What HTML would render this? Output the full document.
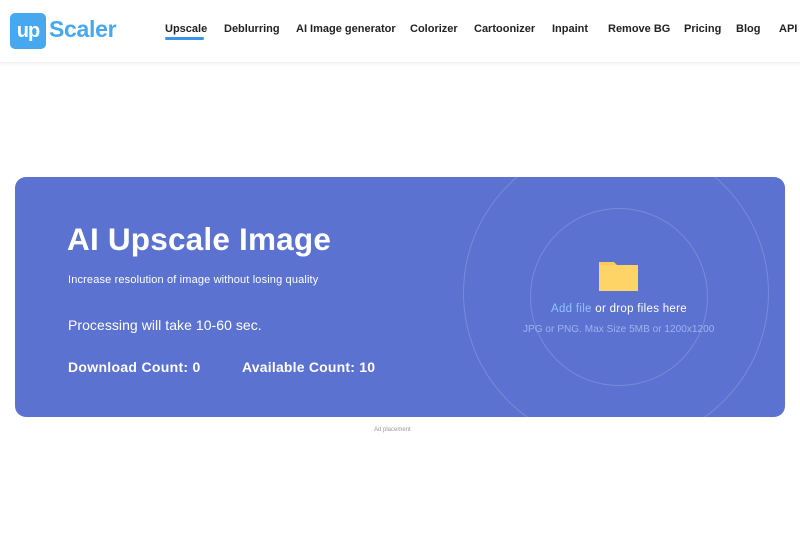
<!DOCTYPE html>
<html><head><meta charset="utf-8"><style>
*{margin:0;padding:0;box-sizing:border-box}
body{width:800px;height:533px;background:#fff;font-family:"Liberation Sans",sans-serif;position:relative;overflow:hidden}
.hdr{position:absolute;left:0;top:0;width:800px;height:63px;background:#fff;box-shadow:0 1px 3px rgba(0,0,0,.06);border-bottom:1px solid #f0f0f3}
.logo{position:absolute;left:10px;top:13px;width:36px;height:36px;background:#47a7ef;border-radius:5px;color:#fff;font-weight:bold;font-size:20px;line-height:36px;text-align:center;letter-spacing:-1px}
.logot{position:absolute;left:49px;top:16px;font-size:23px;font-weight:bold;color:#47a7ef;letter-spacing:-0.3px}
.nav a{position:absolute;top:23px;font-size:11px;font-weight:bold;color:#222;text-decoration:none;white-space:nowrap}
.ul{position:absolute;left:165px;top:37px;width:39px;height:3px;border-radius:2px;background:#3a95e5}
.card{position:absolute;left:15px;top:177px;width:770px;height:240px;background:#5b72d0;border-radius:11px;overflow:hidden}
.c{position:absolute;border:1px solid rgba(255,255,255,.18);border-radius:50%}
.t{position:absolute;color:#fff;white-space:nowrap}
</style></head><body>
<div class="hdr">
<div class="logo">up</div><div class="logot">Scaler</div>
<div class="nav">
<a style="left:165px">Upscale</a><a style="left:224px">Deblurring</a><a style="left:296px">AI Image generator</a><a style="left:410px">Colorizer</a><a style="left:474px">Cartoonizer</a><a style="left:552px">Inpaint</a><a style="left:608px">Remove BG</a><a style="left:684px">Pricing</a><a style="left:736px">Blog</a><a style="left:779px">API</a>
</div><div class="ul"></div>
</div>
<div class="card">
<div class="c" style="left:448px;top:-37px;width:306px;height:306px"></div>
<div class="c" style="left:515px;top:31px;width:178px;height:178px"></div>
<div class="t" style="left:52px;top:44px;font-size:31.5px;font-weight:bold;letter-spacing:0.2px">AI Upscale Image</div>
<div class="t" style="left:53px;top:97px;font-size:11px;letter-spacing:0.15px">Increase resolution of image without losing quality</div>
<div class="t" style="left:53px;top:140px;font-size:14px;letter-spacing:0.05px">Processing will take 10-60 sec.</div>
<div class="t" style="left:53px;top:182px;font-size:14px;font-weight:bold;letter-spacing:0.3px">Download Count: 0</div>
<div class="t" style="left:227px;top:182px;font-size:14px;font-weight:bold;letter-spacing:0.2px">Available Count: 10</div>
<svg style="position:absolute;left:583px;top:82px" width="41" height="33"><path d="M1 3h15l3 3h21v26H1z" fill="#fcc95a"/><path d="M1 6h39v26H1z" fill="#fdd465"/></svg>
<div class="t" style="left:536px;top:126px;font-size:11.5px;letter-spacing:0.3px"><span style="color:#8fc4ff">Add file</span> or drop files here</div>
<div class="t" style="left:508px;top:147px;font-size:10px;color:#9fb3ee;letter-spacing:0.05px">JPG or PNG. Max Size 5MB or 1200x1200</div>
</div>
<div style="position:absolute;left:374px;top:427px;font-size:6px;color:#999">Ad placement</div>
</body></html>
